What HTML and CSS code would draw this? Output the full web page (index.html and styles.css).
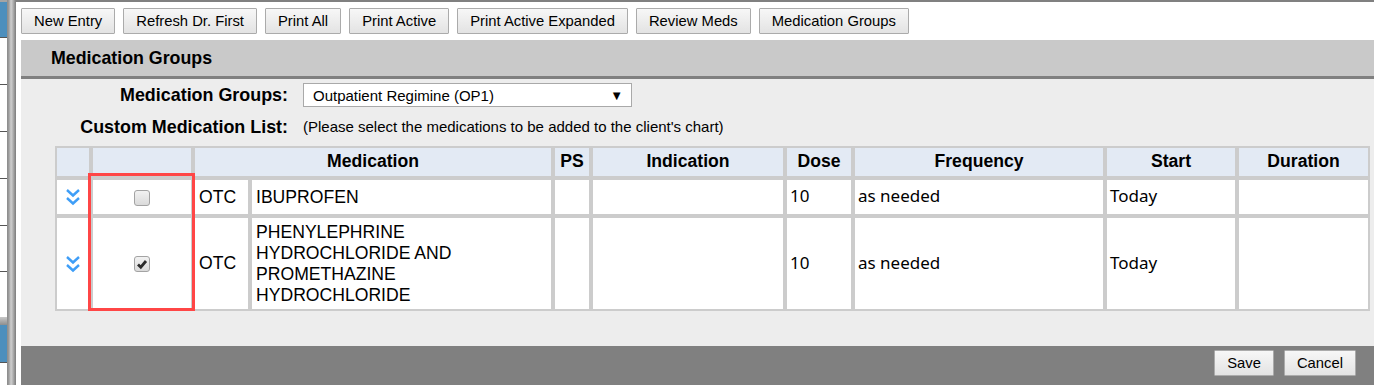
FILE: index.html
```html
<!doctype html>
<html lang="en-us">
	<head>
		<meta charset="utf-8">
		<title>Medication Groups</title>
		<link rel="stylesheet" href="styles.css">
	</head>
	<body>
		<div class="backdrop">
			<div class="bd-top"></div>
			<div class="bd-blue"></div>
			<div class="bd-row"></div>
			<div class="bd-row"></div>
			<div class="bd-row"></div>
			<div class="bd-row"></div>
			<div class="bd-row bd-last"></div>
			<div class="bd-cap"></div>
			<div class="bd-blue bd-low"></div>
		</div>
		<div class="rail"></div>

		<div class="panel">
			<div class="toolbar">
				<button class="btn">New Entry</button>
				<button class="btn">Refresh Dr. First</button>
				<button class="btn">Print All</button>
				<button class="btn">Print Active</button>
				<button class="btn">Print Active Expanded</button>
				<button class="btn">Review Meds</button>
				<button class="btn">Medication Groups</button>
			</div>

			<div class="section-title">Medication Groups</div>

			<div class="content">
				<div class="form">
					<label class="form-label">Medication Groups:</label>
					<div class="select">
						<span>Outpatient Regimine (OP1)</span>
						<span class="select-arrow">&#9660;</span>
					</div>
					<label class="form-label form-label-2">Custom Medication List:</label>
					<div class="note">(Please select the medications to be added to the client's chart)</div>
				</div>

				<div class="table-wrap">
					<table class="meds">
						<colgroup>
							<col style="width: 36px">
							<col style="width: 102px">
							<col style="width: 57px">
							<col style="width: 303px">
							<col style="width: 38px">
							<col style="width: 194px">
							<col style="width: 68px">
							<col style="width: 252px">
							<col style="width: 132px">
							<col style="width: 133px">
						</colgroup>
						<tr class="head">
							<th></th>
							<th></th>
							<th colspan="2">Medication</th>
							<th>PS</th>
							<th>Indication</th>
							<th>Dose</th>
							<th>Frequency</th>
							<th>Start</th>
							<th>Duration</th>
						</tr>
						<tr class="row-1">
							<td class="c-icon">
								<svg class="expand" width="16" height="18" viewBox="0 0 16 18"><polyline points="2,2 8,7.5 14,2"/><polyline points="2,10 8,15.5 14,10"/></svg>
							</td>
							<td class="c-check"><span class="chk"></span></td>
							<td>OTC</td>
							<td>IBUPROFEN</td>
							<td></td>
							<td></td>
							<td class="alt">10</td>
							<td class="alt">as needed</td>
							<td class="alt">Today</td>
							<td></td>
						</tr>
						<tr class="row-2">
							<td class="c-icon">
								<svg class="expand" width="16" height="18" viewBox="0 0 16 18"><polyline points="2,2 8,7.5 14,2"/><polyline points="2,10 8,15.5 14,10"/></svg>
							</td>
							<td class="c-check">
								<span class="chk">
									<svg width="14" height="14" viewBox="0 0 14 14"><path d="M3 7.5 L5.8 10.2 L11 4"/></svg>
								</span>
							</td>
							<td>OTC</td>
							<td>PHENYLEPHRINE<br>HYDROCHLORIDE AND<br>PROMETHAZINE<br>HYDROCHLORIDE</td>
							<td></td>
							<td></td>
							<td class="alt">10</td>
							<td class="alt">as needed</td>
							<td class="alt">Today</td>
							<td></td>
						</tr>
					</table>
					<div class="highlight"></div>
				</div>
			</div>

			<div class="footer">
				<button class="btn">Save</button>
				<button class="btn">Cancel</button>
			</div>
		</div>
	</body>
</html>
```

FILE: styles.css
```css
body {
	margin: 0;
	height: 385px;
	overflow: hidden;
	display: flex;
	font-family: "Liberation Sans", Arial, sans-serif;
	color: #000;
	background: #fff;
}

/* page behind the dialog */
.backdrop {
	width: 7px;
	flex: none;
	display: flex;
	flex-direction: column;
	background: #fff;
}
.bd-top { height: 2px; background: #a4a4a4; }
.bd-blue { height: 35px; background: #4d8fbd; border-bottom: 1px solid #555; }
.bd-row { height: 46px; border-bottom: 1px solid #555; }
.bd-last { height: 45px; margin-bottom: 45px; }
.bd-cap { height: 8px; background: linear-gradient(#c8c8c8, #8e8e8e); }
.bd-low { height: 37px; }

.rail {
	width: 9px;
	flex: none;
	background: linear-gradient(to right, #8a8a8a, #9c9c9c 20%, #cfcfcf 45%, #b4b4b4 65%, #9a9a9a 80%, #7c7c7c);
}

.panel {
	flex: 1;
	min-width: 0;
	display: flex;
	flex-direction: column;
	border-top: 2px solid #808080;
	padding-left: 5px;
	background: #fff;
}

.btn {
	height: 26px;
	padding: 0 12px;
	border: 1px solid #ababab;
	border-radius: 1px;
	background: linear-gradient(#f7f7f7, #e3e3e3);
	font-family: "Liberation Sans", Arial, sans-serif;
	font-size: 14.8px;
	color: #000;
}

.toolbar {
	display: flex;
	gap: 8px;
	padding: 6px 0;
}

.section-title {
	height: 36px;
	line-height: 36px;
	padding-left: 30px;
	background: #c9c9c9;
	border-bottom: 3px solid #808080;
	font-weight: bold;
	font-size: 17.8px;
}

.content {
	background: #ededed;
	padding: 4px 5px 35px 34px;
}

.form {
	display: grid;
	grid-template-columns: 233px 1fr;
	column-gap: 15px;
	align-items: center;
}
.form-label {
	text-align: right;
	font-weight: bold;
	font-size: 17.9px;
}
.form-label-2 { margin-top: 9px; height: 22px; line-height: 22px; }
.select {
	width: 329px;
	height: 24px;
	box-sizing: border-box;
	display: flex;
	align-items: center;
	justify-content: space-between;
	padding: 0 8px 0 9px;
	border: 1px solid #a9a9a9;
	background: #fff;
	font-size: 15px;
}
.select-arrow { font-size: 13px; }
.note {
	margin-top: 9px;
	font-size: 15px;
	line-height: 22px;
}

.table-wrap {
	position: relative;
	margin-top: 8px;
}

.meds {
	table-layout: fixed;
	width: 1315px;
	border-collapse: separate;
	border-spacing: 0;
	font-size: 17.6px;
}
.meds th,
.meds td {
	border: 2px solid #cccccc;
	padding: 0 4px;
	vertical-align: middle;
	text-align: left;
	line-height: 21px;
	background: #fff;
	white-space: nowrap;
}
.meds th {
	background: #e3eaf4;
	text-align: center;
	font-weight: bold;
	padding-bottom: 2px;
}
.meds .head { height: 32px; }
.meds .row-1 { height: 38px; }
.meds .row-2 { height: 95px; }
.meds td.alt {
	font-family: "Noto Sans", sans-serif;
	font-size: 17px;
	padding-left: 3px;
	padding-bottom: 3px;
}
.meds td.c-icon,
.meds td.c-check {
	text-align: center;
	padding: 0;
}

.expand {
	display: block;
	margin: 0 auto;
	fill: none;
	stroke: #3f9ef7;
	stroke-width: 2.4;
}

.chk {
	display: inline-flex;
	align-items: center;
	justify-content: center;
	width: 16px;
	height: 16px;
	box-sizing: border-box;
	vertical-align: middle;
	border: 1px solid #a3a3a3;
	border-radius: 3px;
	background: linear-gradient(#f2f2f2, #dadada);
}
.chk svg {
	fill: none;
	stroke: #2b2b2b;
	stroke-width: 2.8;
}

/* red annotation frame drawn over the checkbox column */
.highlight {
	position: absolute;
	left: 33px;
	top: 27px;
	width: 107px;
	height: 138px;
	box-sizing: border-box;
	border: 3px solid #ff4646;
}

.footer {
	flex: 1;
	display: flex;
	justify-content: flex-end;
	align-items: flex-start;
	gap: 10px;
	padding: 4px 18px 0 0;
	background: #808080;
}
```
